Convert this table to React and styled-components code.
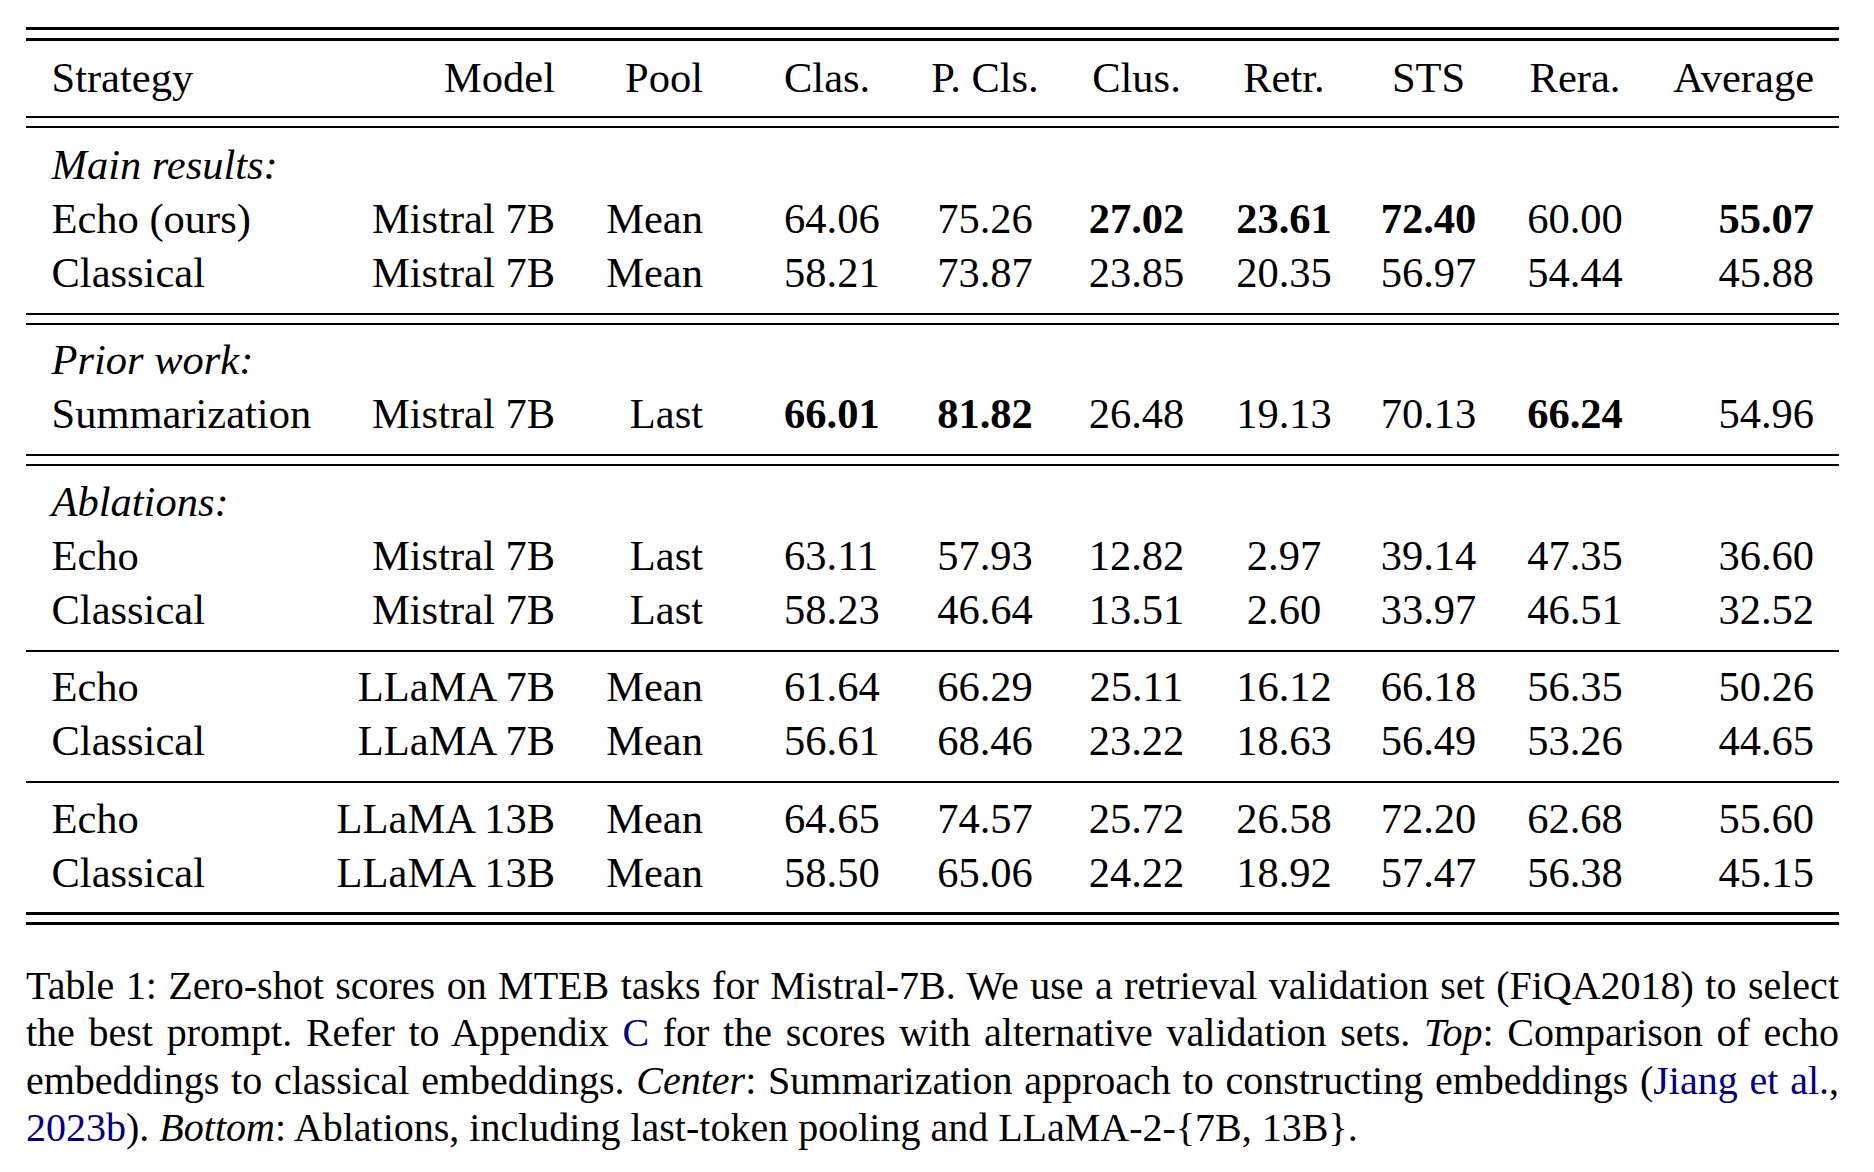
import React from 'react';
import styled, { createGlobalStyle } from 'styled-components';

const GlobalStyle = createGlobalStyle`
  html, body {
    margin: 0;
    padding: 0;
    background: #ffffff;
  }
  body {
    font-family: "Liberation Serif", "Times New Roman", serif;
    color: #000000;
  }
`;

const Page = styled.div`
  width: 1813px;
  padding: 27px 0 40px 26px;
`;

// booktabs-like rules
const RuleGroup = styled.div`
  margin-top: ${p => p.$gap}px;
  display: flex;
  flex-direction: column;
  gap: ${p => p.$inner}px;
`;

const Line = styled.div`
  height: ${p => p.$w}px;
  background: #000;
`;

const Rules = ({ gap, count = 1, w = 2, inner = 8 }) => (
  <RuleGroup $gap={gap} $inner={inner}>
    {Array.from({ length: count }).map((_, i) => (
      <Line key={i} $w={w} />
    ))}
  </RuleGroup>
);

const Section = styled.div`
  margin-top: ${p => p.$gap}px;
`;

const Row = styled.div`
  display: grid;
  grid-template-columns: 294px 259px 148px 181px 154px 149px 146px 143px 150px 189px;
  height: 54px;
  line-height: 54px;
  font-size: 42.5px;
`;

const Cell = styled.div`
  text-align: ${p => p.$align};
  padding-left: ${p => p.$pl || 0}px;
  padding-right: ${p => p.$pr || 0}px;
  font-weight: ${p => (p.$bold ? 700 : 400)};
  white-space: nowrap;
`;

const Label = styled.div`
  grid-column: 1 / -1;
  padding-left: 25.5px;
  font-style: italic;
`;

const Caption = styled.div`
  margin-top: 36.7px;
  font-size: 40px;
  line-height: 47.6px;
`;

const CapLine = styled.div`
  text-align: ${p => (p.$last ? 'left' : 'justify')};
  text-align-last: ${p => (p.$last ? 'left' : 'justify')};
`;

const Ref = styled.span`
  color: #000080;
`;

const Em = styled.i`
  font-style: italic;
`;

const cols = [
  { align: 'left', pl: 25.5 },
  { align: 'right', pr: 24 },
  { align: 'right', pr: 24 },
  { align: 'left', pl: 57 },
  { align: 'center' },
  { align: 'center' },
  { align: 'center' },
  { align: 'center' },
  { align: 'center' },
  { align: 'right', pr: 25 },
];

const header = ['Strategy', 'Model', 'Pool', 'Clas.', 'P. Cls.', 'Clus.', 'Retr.', 'STS', 'Rera.', 'Average'];

// "*" prefix marks a bold (best) value
const sections = [
  {
    label: 'Main results:',
    rows: [
      ['Echo (ours)', 'Mistral 7B', 'Mean', '64.06', '75.26', '*27.02', '*23.61', '*72.40', '60.00', '*55.07'],
      ['Classical', 'Mistral 7B', 'Mean', '58.21', '73.87', '23.85', '20.35', '56.97', '54.44', '45.88'],
    ],
  },
  {
    label: 'Prior work:',
    rows: [
      ['Summarization', 'Mistral 7B', 'Last', '*66.01', '*81.82', '26.48', '19.13', '70.13', '*66.24', '54.96'],
    ],
  },
  {
    label: 'Ablations:',
    rows: [
      ['Echo', 'Mistral 7B', 'Last', '63.11', '57.93', '12.82', '2.97', '39.14', '47.35', '36.60'],
      ['Classical', 'Mistral 7B', 'Last', '58.23', '46.64', '13.51', '2.60', '33.97', '46.51', '32.52'],
    ],
  },
  {
    rows: [
      ['Echo', 'LLaMA 7B', 'Mean', '61.64', '66.29', '25.11', '16.12', '66.18', '56.35', '50.26'],
      ['Classical', 'LLaMA 7B', 'Mean', '56.61', '68.46', '23.22', '18.63', '56.49', '53.26', '44.65'],
    ],
  },
  {
    rows: [
      ['Echo', 'LLaMA 13B', 'Mean', '64.65', '74.57', '25.72', '26.58', '72.20', '62.68', '55.60'],
      ['Classical', 'LLaMA 13B', 'Mean', '58.50', '65.06', '24.22', '18.92', '57.47', '56.38', '45.15'],
    ],
  },
];

const after = [
  { gap: 13, count: 2 },
  { gap: 13, count: 2 },
  { gap: 13, count: 1 },
  { gap: 13, count: 1 },
  { gap: 12.5, count: 2, w: 3, inner: 7 },
];

const DataRow = ({ values }) => (
  <Row>
    {values.map((v, i) => {
      const bold = v.startsWith('*');
      return (
        <Cell key={i} $align={cols[i].align} $pl={cols[i].pl} $pr={cols[i].pr} $bold={bold}>
          {bold ? v.slice(1) : v}
        </Cell>
      );
    })}
  </Row>
);

export default function App() {
  return (
    <>
      <GlobalStyle />
      <Page>
        <Rules gap={0} count={2} w={3} inner={8} />
        <Section $gap={10}>
          <DataRow values={header} />
        </Section>
        <Rules gap={11} count={2} />
        {sections.map((s, si) => (
          <React.Fragment key={si}>
            <Section $gap={si === 0 ? 9.5 : 8.5}>
              {s.label && (
                <Row>
                  <Label>{s.label}</Label>
                </Row>
              )}
              {s.rows.map((r, ri) => (
                <DataRow key={ri} values={r} />
              ))}
            </Section>
            <Rules {...after[si]} />
          </React.Fragment>
        ))}
        <Caption>
          <CapLine>
            Table 1: Zero-shot scores on MTEB tasks for Mistral-7B. We use a retrieval validation set (FiQA2018) to select
          </CapLine>
          <CapLine>
            the best prompt. Refer to Appendix <Ref>C</Ref> for the scores with alternative validation sets. <Em>Top</Em>: Comparison of echo
          </CapLine>
          <CapLine>
            embeddings to classical embeddings. <Em>Center</Em>: Summarization approach to constructing embeddings (<Ref>Jiang et al.</Ref>,
          </CapLine>
          <CapLine $last>
            <Ref>2023b</Ref>). <Em>Bottom</Em>: Ablations, including last-token pooling and LLaMA-2-{'{'}7B, 13B{'}'}.
          </CapLine>
        </Caption>
      </Page>
    </>
  );
}
